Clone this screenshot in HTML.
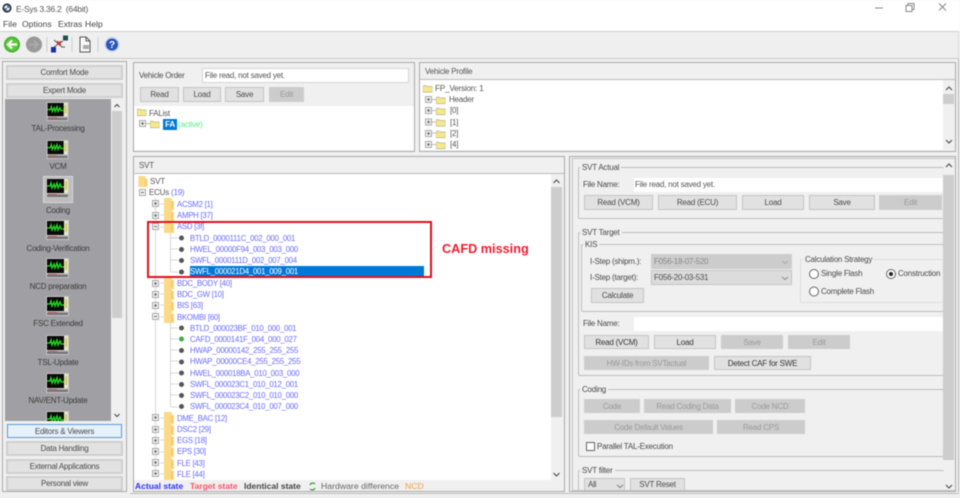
<!DOCTYPE html>
<html><head><meta charset="utf-8"><style>
html,body{margin:0;padding:0;background:#f0f0f0}
#w{position:relative;width:960px;height:498px;overflow:hidden;background:#f0f0f0;font-family:"Liberation Sans",sans-serif;font-size:8px;letter-spacing:-.22px;color:#4a4a4a;filter:blur(.4px)}
#w div,#w span.a{position:absolute;box-sizing:border-box}
.t{white-space:nowrap;height:12px;line-height:12px;margin-top:1px}
.b{display:flex;align-items:center;justify-content:center;background:#e1e1e1;border:1px solid #c4c4c4;color:#4a4a4a;white-space:nowrap}
.d{background:#ccc;border-color:#ccc;color:#999}
.i{background:#fff;border:1px solid #d4d4d4;padding-left:2px;line-height:12px;white-space:nowrap;color:#555}
.g{border:1px solid #bdbdbd;border-radius:2px}
.l{background:#f0f0f0;padding:0 2px;white-space:nowrap;height:12px;line-height:12px;margin-top:1px}
.p{border:1px solid #a9a9a9;background:#f0f0f0}
.tr{color:#6a6aff;font-size:7.8px;letter-spacing:-.24px}
.c{text-align:center;white-space:nowrap;width:116px;left:0;height:12px;line-height:12px;color:#3a3a3a;font-size:8px;margin-top:1px}
.n{letter-spacing:0}
svg{position:absolute;overflow:visible}
</style></head><body><div id="w">
<svg width="0" height="0" style="left:0;top:0"><defs>
<symbol id="m" viewBox="0 0 23 20"><rect x="0" y="0" width="23" height="20" fill="#c4c4c4"/><rect x="1" y="1" width="21" height="14" fill="#e8e8d8"/><rect x="1" y="1" width="17" height="14" fill="#0a0a0a"/><path d="M1 8h3l1-3 1 5 2-4 1 4 2-5 1 5 2-4 1 3h3" fill="none" stroke="#22e022" stroke-width="1.3"/><rect x="19" y="3" width="2" height="9" fill="#d8c850"/><rect x="1" y="16.500" width="21" height="2.500" fill="#777"/><rect x="2" y="16" width="9" height=".6" fill="#e04040"/></symbol>
<symbol id="f" viewBox="0 0 10 12"><path d="M0 0h7l1 1v2h2v9H0z" fill="#fbd985"/><path d="M8 3v8" stroke="#eec060"/></symbol>
<symbol id="y" viewBox="0 0 12 9"><path d="M0 1h4l1 1h6v7H0z" fill="#f0e27a" stroke="#999" stroke-width=".6"/><rect x="1" y="3" width="10" height="5.5" fill="#f5e88a"/></symbol>
<symbol id="pl" viewBox="0 0 7 7"><rect x=".5" y=".5" width="6" height="6" fill="#f4f4f4" stroke="#aaa"/><path d="M2 3.5h3M3.5 2v3" stroke="#666"/></symbol>
<symbol id="mi" viewBox="0 0 7 7"><rect x=".5" y=".5" width="6" height="6" fill="#f4f4f4" stroke="#aaa"/><path d="M2 3.5h3" stroke="#666"/></symbol>
</defs></svg>

<!-- title bar -->
<div style="left:0;top:0;width:960px;height:31px;background:#fff"></div>
<svg style="left:2px;top:3px" width="10" height="10" viewBox="0 0 10 10"><circle cx="5" cy="5" r="4.6" fill="#333"/><circle cx="5" cy="5" r="2.8" fill="#fff"/><path d="M5 5V2.2A2.8 2.8 0 0 1 7.8 5zM5 5v2.8A2.8 2.8 0 0 1 2.2 5z" fill="#3a7fc0"/></svg>
<div class="t" style="left:16px;top:2px;font-size:8.4px;color:#555;letter-spacing:-.2px">E-Sys 3.36.2&nbsp; (64bit)</div>
<div class="t n" style="left:3px;top:17px;font-size:8.6px;color:#444">File</div>
<div class="t n" style="left:22px;top:17px;font-size:8.6px;color:#444">Options</div>
<div class="t n" style="left:58px;top:17px;font-size:8.6px;color:#444">Extras</div>
<div class="t n" style="left:85px;top:17px;font-size:8.6px;color:#444">Help</div>
<svg style="left:875px;top:2px" width="80" height="12" viewBox="0 0 80 12" fill="none" stroke="#888"><path d="M0 6h8"/><rect x="31" y="3.5" width="6" height="6"/><path d="M33 3.5v-2h6v6h-2"/><path d="M64 1.500l7 7M71 1.500l-7 7"/></svg>

<!-- toolbar -->
<div style="left:0;top:31px;width:959px;height:28px;background:#efefef;border-top:1px solid #d0d0d0;border-bottom:1px solid #c8c8c8;border-right:1px solid #ddd"></div>
<svg style="left:4px;top:36px" width="118" height="18" viewBox="0 0 118 18">
<circle cx="8" cy="8.500" r="8" fill="#3fae2a"/><circle cx="8" cy="8.500" r="6.500" fill="#5cc83c"/><path d="M13 8.500H5M8 4.500l-4 4 4 4" fill="none" stroke="#fff" stroke-width="2.200"/>
<circle cx="30" cy="8.500" r="8" fill="#999"/><path d="M25 8.500h8M30 4.500l4 4-4 4" fill="none" stroke="#aaa" stroke-width="2"/>
<path d="M43 1v15" stroke="#ccc"/>
<rect x="59" y="-.5" width="5" height="5" fill="#1f4f50"/><rect x="47" y="11" width="5" height="5.500" fill="#1a2fa0"/>
<path d="M50 11l9-6M50 4l8 7h3" fill="none" stroke="#555"/><path d="M53 5l4 4M57 5l-4 4" stroke="#e02020" stroke-width="1.200"/>
<path d="M68 1v15" stroke="#ccc"/>
<path d="M76 1h6l4 4v11H76z" fill="#fafafa" stroke="#555"/><path d="M82 1v4h4" fill="none" stroke="#555"/><rect x="79" y="9" width="6" height="4" fill="#aaa"/>
<path d="M94 1v15" stroke="#ccc"/>
<circle cx="108" cy="8.500" r="7.500" fill="#c8d4f0"/><circle cx="108" cy="8.500" r="6" fill="#2a56b8"/><text x="108" y="12" font-family="Liberation Sans" font-weight="bold" font-size="10" text-anchor="middle" fill="#fff">?</text>
</svg>

<!-- left panel -->
<div class="p" style="left:2px;top:61px;width:125px;height:431px"></div>
<div class="b" style="left:6px;top:65px;width:117px;height:15px;border:2px solid #cfcfcf;background:#e2e2e2">Comfort Mode</div>
<div class="b" style="left:6px;top:83px;width:117px;height:15px;border:2px solid #cfcfcf;background:#e2e2e2">Expert Mode</div>
<div style="left:5px;top:99px;width:106px;height:322px;background:#a09fa3;overflow:hidden"></div>
<div style="left:111px;top:99px;width:12px;height:322px;background:#f0f0f0"></div>
<div style="left:112px;top:111px;width:10px;height:207px;background:#cdcdcd"></div>
<svg style="left:113px;top:102px" width="8" height="318" viewBox="0 0 8 318" fill="none" stroke="#444"><path d="M1.500 5l2.500-2.500 2.500 2.500M1.500 312l2.500 2.500 2.500-2.500"/></svg>
<svg style="left:46px;top:102px" width="23" height="19"><use href="#m" width="23" height="19"/></svg>
<svg style="left:46px;top:140px" width="23" height="19"><use href="#m" width="23" height="19"/></svg>
<div style="left:43px;top:176px;width:30px;height:27px;background:#bdbdbd;border:1px solid #d8d8d8"></div>
<svg style="left:46px;top:178px" width="23" height="20"><use href="#m" width="23" height="20"/></svg>
<svg style="left:46px;top:220px" width="23" height="20"><use href="#m" width="23" height="20"/></svg>
<svg style="left:46px;top:258px" width="23" height="20"><use href="#m" width="23" height="20"/></svg>
<svg style="left:46px;top:296px" width="23" height="20"><use href="#m" width="23" height="20"/></svg>
<svg style="left:46px;top:335px" width="23" height="20"><use href="#m" width="23" height="20"/></svg>
<svg style="left:46px;top:373px" width="23" height="20"><use href="#m" width="23" height="20"/></svg>
<div style="left:46px;top:411px;width:23px;height:10px;overflow:hidden"><svg style="left:0;top:0" width="23" height="20"><use href="#m" width="23" height="20"/></svg></div>
<div class="c" style="top:122px">TAL-Processing</div>
<div class="c" style="top:160px">VCM</div>
<div class="c" style="top:204px">Coding</div>
<div class="c" style="top:242px">Coding-Verification</div>
<div class="c" style="top:280px">NCD preparation</div>
<div class="c" style="top:317px">FSC Extended</div>
<div class="c" style="top:356px">TSL-Update</div>
<div class="c" style="top:394px">NAV/ENT-Update</div>
<div class="b" style="left:7px;top:424px;width:115px;height:14px;background:#e5f1fb;border:1px solid #5a9bd8">Editors &amp; Viewers</div>
<div class="b" style="left:6px;top:441px;width:117px;height:15px;border:2px solid #cfcfcf;background:#e2e2e2">Data Handling</div>
<div class="b" style="left:6px;top:459px;width:117px;height:15px;border:2px solid #cfcfcf;background:#e2e2e2">External Applications</div>
<div class="b" style="left:6px;top:476px;width:117px;height:15px;border:2px solid #cfcfcf;background:#e2e2e2">Personal view</div>

<!-- vehicle order -->
<div class="p" style="left:130px;top:59px;width:829px;height:435px;border-color:#b5b5b5;border-left:none;border-top:none;border-bottom:none"></div>
<div class="p" style="left:133px;top:62px;width:282px;height:90px"></div>
<div class="t" style="left:139px;top:69px">Vehicle Order</div>
<div class="i" style="left:202px;top:68px;width:207px;height:15px;line-height:14px">File read, not saved yet.</div>
<div class="b" style="left:140px;top:87px;width:39px;height:15px">Read</div>
<div class="b" style="left:183px;top:87px;width:38px;height:15px">Load</div>
<div class="b" style="left:225px;top:87px;width:39px;height:15px">Save</div>
<div class="b d" style="left:269px;top:87px;width:35px;height:15px">Edit</div>
<div style="left:134px;top:106px;width:280px;height:44px;background:#fff"></div>
<svg style="left:137px;top:108px" width="10" height="8"><use href="#y" width="10" height="8"/></svg>
<div class="t" style="left:149px;top:107px;color:#555">FAList</div>
<svg style="left:139px;top:120px" width="7" height="7"><use href="#pl" width="7" height="7"/></svg>
<svg style="left:146px;top:123px" width="5" height="1"><path d="M0 .5h5" stroke="#bbb"/></svg>
<svg style="left:150px;top:120px" width="10" height="8"><use href="#y" width="10" height="8"/></svg>
<div style="left:163px;top:119px;width:14px;height:11px;background:#0078d7;color:#fff;line-height:11px;text-align:center;font-weight:bold">FA</div>
<div class="t" style="left:178px;top:118px;color:#55ee88">(active)</div>

<!-- vehicle profile -->
<div class="p" style="left:419px;top:62px;width:537px;height:90px"></div>
<div class="t" style="left:425px;top:65px;color:#555">Vehicle Profile</div>
<div style="left:420px;top:79px;width:535px;height:1px;background:#bbb"></div>
<div style="left:420px;top:80px;width:523px;height:70px;background:#fff"></div>
<div style="left:943px;top:80px;width:12px;height:70px;background:#f0f0f0"></div>
<div style="left:943px;top:94px;width:11px;height:10px;background:#cdcdcd"></div>
<svg style="left:945px;top:85px" width="8" height="60" fill="none" stroke="#444"><path d="M1 5l3-3 3 3M1 55l3 3 3-3"/></svg>
<svg style="left:423px;top:84px" width="10" height="9"><use href="#y" width="10" height="9"/></svg>
<div class="t" style="left:435px;top:82px;color:#555;font-size:8.2px">FP_Version: 1</div>
<svg style="left:424px;top:96px" width="30" height="54"><path d="M4.500 0v50" stroke="#ddd" stroke-dasharray="1 1"/><path d="M8 3.500h4M8 14.500h4M8 26h4M8 37h4M8 48.500h4" stroke="#bbb"/>
<use href="#pl" x="1" y="0" width="7" height="7"/><use href="#pl" x="1" y="11" width="7" height="7"/><use href="#pl" x="1" y="22.500" width="7" height="7"/><use href="#pl" x="1" y="34" width="7" height="7"/><use href="#pl" x="1" y="45" width="7" height="7"/>
<use href="#y" x="12" y="0" width="10" height="8"/><use href="#y" x="12" y="11" width="10" height="8"/><use href="#y" x="12" y="22.500" width="10" height="8"/><use href="#y" x="12" y="34" width="10" height="8"/><use href="#y" x="12" y="45" width="10" height="8"/></svg>
<div class="t" style="left:449px;top:93px;color:#555">Header</div>
<div class="t" style="left:450px;top:104px;color:#555">[0]</div>
<div class="t" style="left:450px;top:116px;color:#555">[1]</div>
<div class="t" style="left:450px;top:127px;color:#555">[2]</div>
<div class="t" style="left:450px;top:138px;color:#555">[4]</div>

<!-- SVT panel -->
<div class="p" style="left:133px;top:156px;width:432px;height:336px"></div>
<div class="t" style="left:139px;top:159px;color:#555">SVT</div>
<div style="left:134px;top:173px;width:430px;height:1px;background:#bbb"></div>
<div style="left:134px;top:174px;width:417px;height:306px;background:#fff"></div>
<div style="left:551px;top:174px;width:13px;height:306px;background:#f0f0f0"></div>
<div style="left:551px;top:187px;width:11px;height:230px;background:#cdcdcd"></div>
<svg style="left:552px;top:178px" width="9" height="300" fill="none" stroke="#444"><path d="M1.500 5l3-3 3 3M1.500 295l3 3 3-3"/></svg>

<svg style="left:0;top:0" width="560" height="498">
<g fill="none" stroke="#d8d8d8">
<path d="M155.500 198v275M142.500 196v0"/>
<path d="M160 204h4M160 215h4M160 227h4M160 283h4M160 294h4M160 305h4M160 317h4M160 418h4M160 429h4M160 440h4M160 452h4M160 463h4M160 474h4" />
<path d="M170.500 232v40M170.500 322v85M171 238h7M171 249h7M171 260h7M171 272h7M171 328h7M171 339h7M171 350h7M171 361h7M171 373h7M171 384h7M171 395h7M171 407h7"/>
</g>
<use href="#f" x="138" y="176" width="10" height="11"/>
<use href="#mi" x="139" y="189" width="7" height="7"/>
<use href="#pl" x="152" y="200" width="7" height="7"/><use href="#f" x="164" y="198" width="10" height="12"/>
<use href="#pl" x="152" y="212" width="7" height="7"/><use href="#f" x="164" y="209" width="10" height="12"/>
<use href="#mi" x="152" y="223" width="7" height="7"/><use href="#f" x="164" y="221" width="10" height="12"/>
<use href="#pl" x="152" y="280" width="7" height="7"/><use href="#f" x="164" y="277" width="10" height="12"/>
<use href="#pl" x="152" y="291" width="7" height="7"/><use href="#f" x="164" y="288" width="10" height="12"/>
<use href="#pl" x="152" y="302" width="7" height="7"/><use href="#f" x="164" y="299" width="10" height="12"/>
<use href="#mi" x="152" y="313" width="7" height="7"/><use href="#f" x="164" y="311" width="10" height="12"/>
<use href="#pl" x="152" y="414" width="7" height="7"/><use href="#f" x="164" y="412" width="10" height="12"/>
<use href="#pl" x="152" y="426" width="7" height="7"/><use href="#f" x="164" y="423" width="10" height="12"/>
<use href="#pl" x="152" y="437" width="7" height="7"/><use href="#f" x="164" y="434" width="10" height="12"/>
<use href="#pl" x="152" y="448" width="7" height="7"/><use href="#f" x="164" y="445" width="10" height="12"/>
<use href="#pl" x="152" y="459" width="7" height="7"/><use href="#f" x="164" y="457" width="10" height="12"/>
<use href="#pl" x="152" y="470" width="7" height="7"/><use href="#f" x="164" y="468" width="10" height="12"/>
<g fill="#555"><circle cx="181.500" cy="238" r="2.500"/><circle cx="181.500" cy="249.500" r="2.500"/><circle cx="181.500" cy="260.500" r="2.500"/><circle cx="181.500" cy="272" r="2.500"/><circle cx="181.500" cy="328" r="2.500"/><circle cx="181.500" cy="350.500" r="2.500"/><circle cx="181.500" cy="362" r="2.500"/><circle cx="181.500" cy="373" r="2.500"/><circle cx="181.500" cy="384.500" r="2.500"/><circle cx="181.500" cy="395.500" r="2.500"/><circle cx="181.500" cy="406.500" r="2.500"/></g>
<circle cx="181.500" cy="339" r="2.500" fill="#3fae3a"/>
</svg>

<div class="t" style="left:150px;top:175px;color:#555">SVT</div>
<div class="t" style="left:149px;top:186px;color:#555">ECUs <span style="color:#6a6aff">(19)</span></div>
<div class="t tr" style="left:177px;top:198px">ACSM2 [1]</div>
<div class="t tr" style="left:177px;top:209px">AMPH [37]</div>
<div class="t tr" style="left:177px;top:220px">ASD [3f]</div>
<div class="t tr" style="left:190px;top:232px">BTLD_0000111C_002_000_001</div>
<div class="t tr" style="left:190px;top:243px">HWEL_00000F94_003_003_000</div>
<div class="t tr" style="left:190px;top:254px">SWFL_0000111D_002_007_004</div>
<div style="left:190px;top:266px;width:234px;height:11px;background:#0078d7"></div>
<div class="t tr" style="left:190px;top:265px;color:#fff">SWFL_000021D4_001_009_001</div>
<div class="t tr" style="left:177px;top:277px">BDC_BODY [40]</div>
<div class="t tr" style="left:177px;top:288px">BDC_GW [10]</div>
<div class="t tr" style="left:177px;top:299px">BIS [63]</div>
<div class="t tr" style="left:177px;top:311px">BKOMBI [60]</div>
<div class="t tr" style="left:190px;top:322px">BTLD_000023BF_010_000_001</div>
<div class="t tr" style="left:190px;top:333px">CAFD_0000141F_004_000_027</div>
<div class="t tr" style="left:190px;top:344px">HWAP_00000142_255_255_255</div>
<div class="t tr" style="left:190px;top:355px">HWAP_00000CE4_255_255_255</div>
<div class="t tr" style="left:190px;top:367px">HWEL_000018BA_010_003_000</div>
<div class="t tr" style="left:190px;top:378px">SWFL_000023C1_010_012_001</div>
<div class="t tr" style="left:190px;top:389px">SWFL_000023C2_010_010_000</div>
<div class="t tr" style="left:190px;top:400px">SWFL_000023C4_010_007_000</div>
<div class="t tr" style="left:177px;top:412px">DME_BAC [12]</div>
<div class="t tr" style="left:177px;top:423px">DSC2 [29]</div>
<div class="t tr" style="left:177px;top:434px">EGS [18]</div>
<div class="t tr" style="left:177px;top:445px">EPS [30]</div>
<div class="t tr" style="left:177px;top:457px">FLE [43]</div>
<div class="t tr" style="left:177px;top:468px">FLE [44]</div>

<div style="left:147px;top:221px;width:285px;height:57px;border:2px solid #e0101f"></div>
<div class="t n" style="left:442px;top:241px;height:15px;line-height:15px;font-size:12.7px;font-weight:bold;color:#ee1c2e">CAFD missing</div>

<div class="t n" style="left:135px;top:479px;font-size:8.5px;font-weight:bold;color:#2e2eff">Actual state</div>
<div class="t n" style="left:190px;top:479px;font-size:8.5px;font-weight:bold;color:#ff5068">Target state</div>
<div class="t n" style="left:244px;top:479px;font-size:8.5px;font-weight:bold;color:#444">Identical state</div>
<svg style="left:309px;top:482px" width="7" height="9" fill="none" stroke="#3a9a3a"><path d="M1 3a3 3 0 0 1 5-1M6 6a3 3 0 0 1-5 1" stroke-width="1.200"/></svg>
<div class="t n" style="left:321px;top:479px;font-size:8.7px;color:#666">Hardware difference</div>
<div class="t n" style="left:405px;top:479px;font-size:8.7px;color:#f0a040">NCD</div>

<!-- right panel -->
<div class="p" style="left:569px;top:156px;width:387px;height:336px"></div>
<div class="p" style="left:572px;top:158px;width:383px;height:333px;border-color:#c4c4c4"></div>
<div style="left:943px;top:159px;width:12px;height:331px;background:#f0f0f0"></div>
<div style="left:943px;top:175px;width:11px;height:285px;background:#cdcdcd"></div>
<svg style="left:945px;top:162px" width="8" height="328" fill="none" stroke="#444"><path d="M1 5l3-3 3 3M1 323l3 3 3-3"/></svg>

<div class="g" style="left:578px;top:167px;width:366px;height:52px;border-right:none"></div>
<div class="l" style="left:580px;top:161px">SVT Actual</div>
<div class="t" style="left:583px;top:178px">File Name:</div>
<div class="i" style="left:634px;top:178px;width:309px;height:14px;border:none;line-height:14px;padding-left:1px">File read, not saved yet.</div>
<div class="b" style="left:584px;top:195px;width:69px;height:15px">Read (VCM)</div>
<div class="b" style="left:658px;top:195px;width:79px;height:15px">Read (ECU)</div>
<div class="b" style="left:742px;top:195px;width:62px;height:15px">Load</div>
<div class="b" style="left:809px;top:195px;width:66px;height:15px">Save</div>
<div class="b d" style="left:879px;top:195px;width:63px;height:15px">Edit</div>

<div class="g" style="left:578px;top:232px;width:366px;height:144px;border-right:none"></div>
<div class="l" style="left:580px;top:226px">SVT Target</div>
<div class="g" style="left:581px;top:244px;width:363px;height:68px;border-right:none"></div>
<div class="l" style="left:583px;top:238px">KIS</div>
<div class="t" style="left:590px;top:255px">I-Step (shipm.):</div>
<div class="t" style="left:590px;top:271px">I-Step (target):</div>
<div class="b d" style="left:651px;top:254px;width:141px;height:15px;justify-content:flex-start;padding-left:2px;color:#888">F056-18-07-520</div>
<div class="b" style="left:651px;top:270px;width:141px;height:15px;justify-content:flex-start;padding-left:2px;background:#dcdcdc">F056-20-03-531</div>
<svg style="left:781px;top:259px" width="8" height="20" fill="none" stroke="#888"><path d="M1 2l3 2.500 3-2.500" stroke="#aaa"/><path d="M1 18l3 2.500 3-2.500"/></svg>
<div class="b" style="left:591px;top:288px;width:53px;height:15px">Calculate</div>
<div class="g" style="left:800px;top:259px;width:143px;height:44px;border-right:none;border-color:#dedede"></div>
<div class="l" style="left:803px;top:253px">Calculation Strategy</div>
<svg style="left:809px;top:269px" width="90" height="28" fill="#fff" stroke="#666"><circle cx="5" cy="5" r="4.500"/><circle cx="5" cy="22.500" r="4.500"/><circle cx="82" cy="5" r="4.500"/><circle cx="82" cy="5" r="2" fill="#222" stroke="none"/></svg>
<div class="t" style="left:821px;top:267px">Single Flash</div>
<div class="t" style="left:898px;top:267px">Construction</div>
<div class="t" style="left:821px;top:285px">Complete Flash</div>

<div class="t" style="left:583px;top:317px">File Name:</div>
<div class="i" style="left:634px;top:317px;width:309px;height:14px;border:none"></div>
<div class="b" style="left:584px;top:335px;width:65px;height:14px;color:#333">Read (VCM)</div>
<div class="b" style="left:654px;top:335px;width:62px;height:14px;color:#333">Load</div>
<div class="b d" style="left:721px;top:335px;width:62px;height:14px">Save</div>
<div class="b d" style="left:788px;top:335px;width:62px;height:14px">Edit</div>
<div class="b d" style="left:584px;top:356px;width:125px;height:14px">HW-IDs from SVTactual</div>
<div class="b" style="left:714px;top:356px;width:97px;height:14px;color:#333">Detect CAF for SWE</div>

<div class="g" style="left:578px;top:389px;width:366px;height:68px;border-right:none"></div>
<div class="l" style="left:580px;top:383px">Coding</div>
<div class="b d" style="left:584px;top:399px;width:56px;height:14px">Code</div>
<div class="b d" style="left:644px;top:399px;width:87px;height:14px">Read Coding Data</div>
<div class="b d" style="left:735px;top:399px;width:70px;height:14px">Code NCD</div>
<div class="b d" style="left:584px;top:420px;width:129px;height:14px">Code Default Values</div>
<div class="b d" style="left:717px;top:420px;width:88px;height:14px">Read CPS</div>
<div style="left:586px;top:442px;width:9px;height:9px;background:#fff;border:1px solid #666"></div>
<div class="t" style="left:597px;top:440px">Parallel TAL-Execution</div>

<div class="g" style="left:578px;top:470px;width:366px;height:30px;border-right:none;border-bottom:none"></div>
<div class="l" style="left:580px;top:464px">SVT filter</div>
<div class="b" style="left:584px;top:478px;width:41px;height:13px;justify-content:flex-start;padding-left:3px">All</div>
<svg style="left:616px;top:484px" width="8" height="5" fill="none" stroke="#777"><path d="M1 1l3 2.500 3-2.500"/></svg>
<div class="b" style="left:630px;top:478px;width:55px;height:13px">SVT Reset</div>
<div style="left:0;top:492px;width:960px;height:6px;background:#f0f0f0"></div>
<div style="left:130px;top:493px;width:829px;height:1px;background:#bbb"></div>
</div></body></html>
